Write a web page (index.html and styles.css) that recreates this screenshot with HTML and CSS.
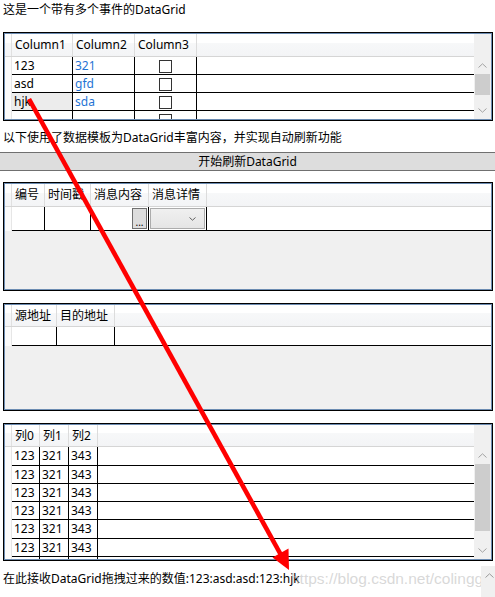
FILE: index.html
```html
<!DOCTYPE html>
<html>
<head>
<meta charset="utf-8">
<link rel="stylesheet" href="styles.css">
</head>
<body>
<div class="page">
  <div class="caption cap1">这是一个带有多个事件的DataGrid</div>

  <div class="grid g1">
    <div class="grid-in">
      <div class="main">
        <div class="hdr">
          <div class="rh"></div>
          <div class="hc c61">Column1</div>
          <div class="hc c62">Column2</div>
          <div class="hc c62">Column3</div>
          <div class="hfill"></div>
        </div>
        <div class="row">
          <div class="rh"></div>
          <div class="cells">
            <div class="cell c61">123</div>
            <div class="cell c62 blue">321</div>
            <div class="cell c62 center"><span class="chk"></span></div>
          </div>
        </div>
        <div class="row">
          <div class="rh"></div>
          <div class="cells">
            <div class="cell c61">asd</div>
            <div class="cell c62 blue">gfd</div>
            <div class="cell c62 center"><span class="chk"></span></div>
          </div>
        </div>
        <div class="row">
          <div class="rh"></div>
          <div class="cells">
            <div class="cell c61 sel">hjk</div>
            <div class="cell c62 blue">sda</div>
            <div class="cell c62 center"><span class="chk"></span></div>
          </div>
        </div>
        <div class="row">
          <div class="rh"></div>
          <div class="cells">
            <div class="cell c61"></div>
            <div class="cell c62 blue"></div>
            <div class="cell c62 center"><span class="chk"></span></div>
          </div>
        </div>
      </div>
      <div class="vscroll">
        <div class="sb-corner"></div>
        <div class="sb-btn"><svg width="9" height="5" viewBox="0 0 9 5"><polyline points="0.5,4.5 4.5,0.8 8.5,4.5" fill="none" stroke="#a3a3a3" stroke-width="1"/></svg></div>
        <div class="sb-thumb t1"></div>
        <div class="sb-track"></div>
        <div class="sb-btn"><svg width="9" height="5" viewBox="0 0 9 5"><polyline points="0.5,0.5 4.5,4.2 8.5,0.5" fill="none" stroke="#a3a3a3" stroke-width="1"/></svg></div>
      </div>
    </div>
  </div>

  <div class="caption cap2">以下使用了数据模板为DataGrid丰富内容，并实现自动刷新功能</div>
  <div class="refresh">开始刷新DataGrid</div>

  <div class="grid g2">
    <div class="grid-in">
      <div class="main">
        <div class="hdr">
          <div class="rh"></div>
          <div class="hc c33">编号</div>
          <div class="hc c46">时间戳</div>
          <div class="hc c58">消息内容</div>
          <div class="hc c58">消息详情</div>
          <div class="hfill"></div>
        </div>
        <div class="row r24">
          <div class="rh"></div>
          <div class="cells">
            <div class="cell c33"></div>
            <div class="cell c46"></div>
            <div class="cell c58 msg"><span class="dots">...</span></div>
            <div class="cell c58 cmbcell"><span class="combo"><svg width="7" height="4" viewBox="0 0 7 4"><polyline points="0.5,0.5 3.5,3.2 6.5,0.5" fill="none" stroke="#606060" stroke-width="1"/></svg></span></div>
          </div>
        </div>
        <div class="empty"></div>
      </div>
    </div>
  </div>

  <div class="grid g3">
    <div class="grid-in">
      <div class="main">
        <div class="hdr h22">
          <div class="rh"></div>
          <div class="hc c45">源地址</div>
          <div class="hc c58">目的地址</div>
          <div class="hfill"></div>
        </div>
        <div class="row r19">
          <div class="rh"></div>
          <div class="cells">
            <div class="cell c45"></div>
            <div class="cell c58"></div>
          </div>
        </div>
        <div class="empty"></div>
      </div>
    </div>
  </div>

  <div class="grid g4">
    <div class="grid-in">
      <div class="main">
        <div class="hdr h22">
          <div class="rh"></div>
          <div class="hc c28">列0</div>
          <div class="hc c29">列1</div>
          <div class="hc c29">列2</div>
          <div class="hfill"></div>
        </div>
        <div class="row r19">
          <div class="rh"></div>
          <div class="cells"><div class="cell c28">123</div><div class="cell c29">321</div><div class="cell c29">343</div></div>
        </div>
        <div class="row">
          <div class="rh"></div>
          <div class="cells"><div class="cell c28">123</div><div class="cell c29">321</div><div class="cell c29">343</div></div>
        </div>
        <div class="row">
          <div class="rh"></div>
          <div class="cells"><div class="cell c28">123</div><div class="cell c29">321</div><div class="cell c29">343</div></div>
        </div>
        <div class="row">
          <div class="rh"></div>
          <div class="cells"><div class="cell c28">123</div><div class="cell c29">321</div><div class="cell c29">343</div></div>
        </div>
        <div class="row r19">
          <div class="rh"></div>
          <div class="cells"><div class="cell c28">123</div><div class="cell c29">321</div><div class="cell c29">343</div></div>
        </div>
        <div class="row">
          <div class="rh"></div>
          <div class="cells"><div class="cell c28">123</div><div class="cell c29">321</div><div class="cell c29">343</div></div>
        </div>
        <div class="row">
          <div class="rh"></div>
          <div class="cells"><div class="cell c28"></div><div class="cell c29"></div><div class="cell c29"></div></div>
        </div>
      </div>
      <div class="vscroll">
        <div class="sb-corner h22c"></div>
        <div class="sb-btn"><svg width="9" height="5" viewBox="0 0 9 5"><polyline points="0.5,4.5 4.5,0.8 8.5,4.5" fill="none" stroke="#a3a3a3" stroke-width="1"/></svg></div>
        <div class="sb-thumb t4"></div>
        <div class="sb-track"></div>
        <div class="sb-btn"><svg width="9" height="5" viewBox="0 0 9 5"><polyline points="0.5,0.5 4.5,4.2 8.5,0.5" fill="none" stroke="#a3a3a3" stroke-width="1"/></svg></div>
      </div>
    </div>
  </div>

  <div class="caption cap3">在此接收DataGrid拖拽过来的数值:123:asd:asd:123:hjk</div>

  <div class="watermark">https://blog.csdn.net/colingg</div>
  <div class="corner-btn"><svg width="9" height="5" viewBox="0 0 9 5"><polyline points="0.5,4.5 4.5,0.8 8.5,4.5" fill="none" stroke="#9a9a9a" stroke-width="1"/></svg></div>

  <svg class="arrow" width="495" height="597" viewBox="0 0 495 597">
    <line x1="29" y1="99" x2="281" y2="555" stroke="#ff0000" stroke-width="4.6" stroke-linecap="butt"/>
    <polygon points="289,570 272.5,557.5 288.5,548.5" fill="#ff0000"/>
  </svg>
</div>
</body>
</html>
```

FILE: styles.css
```css
html, body {
  margin: 0;
  padding: 0;
  background: #ffffff;
}
body {
  font-family: "Noto Sans", "Noto Sans CJK SC", sans-serif;
  font-size: 12px;
  color: #000;
}
.page {
  position: relative;
  width: 495px;
  height: 597px;
  overflow: hidden;
}
.caption {
  padding-left: 3px;
  line-height: 20px;
  height: 20px;
  white-space: nowrap;
}
.cap1 { padding-top: 0; margin-bottom: 12px; }
.cap2 { margin-top: 7px; margin-bottom: 4px; }
.cap3 { margin-top: 8px; }

.refresh {
  box-sizing: border-box;
  height: 19px;
  background: #dddddd;
  border-top: 1px solid #707070;
  border-bottom: 1px solid #707070;
  text-align: center;
  line-height: 17px;
}

.grid {
  box-sizing: border-box;
  margin-left: 3px;
  width: 490px;
  border: 1px solid #000;
}
.grid-in {
  box-sizing: border-box;
  height: 100%;
  border: 1px solid #6c8cb2;
  display: flex;
  background: #f0f0f0;
}
.g1 { height: 89px; }
.g2 { height: 109px; margin-top: 11px; }
.g3 { height: 108px; margin-top: 12px; }
.g4 { height: 138px; margin-top: 12px; }

.main {
  flex: 1;
  display: flex;
  flex-direction: column;
  overflow: hidden;
  min-width: 0;
}
.hdr {
  flex: none;
  display: flex;
  height: 23px;
  box-sizing: border-box;
  border-bottom: 1px solid #d5d5d5;
  background: linear-gradient(#ffffff 0%, #ffffff 40%, #f7f8f9 40%, #f3f4f6 100%);
}
.h22 { height: 22px; }
.hdr .rh {
  background: transparent;
  border-right: 1px solid #e0e0e0;
}
.hc {
  flex: none;
  box-sizing: border-box;
  height: 100%;
  border-right: 1px solid #dcdcdc;
  padding-left: 3px;
  line-height: 22px;
  white-space: nowrap;
  overflow: hidden;
}
.hfill { flex: 1; }

.rh {
  flex: none;
  box-sizing: border-box;
  width: 7px;
  border-right: 1px solid #e6e6e6;
  background: #fbfbfb;
}
.row {
  flex: none;
  display: flex;
  height: 18px;
  background: #fff;
}
.r19 { height: 19px; }
.r24 { height: 24px; }
.cells {
  flex: 1;
  display: flex;
  box-sizing: border-box;
  border-bottom: 1px solid #000;
}
.cell {
  flex: none;
  box-sizing: border-box;
  border-right: 1px solid #000;
  padding-left: 2px;
  line-height: 17px;
  white-space: nowrap;
  overflow: hidden;
}
.blue { color: #1f74d4; }
.sel { background: #ececec; }
.center {
  display: flex;
  justify-content: center;
  padding-left: 0;
}
.chk {
  margin-top: 3px;
  box-sizing: border-box;
  width: 13px;
  height: 13px;
  border: 1px solid #333;
  background: #fff;
}
.c28 { width: 28px; }
.c29 { width: 29px; }
.c33 { width: 33px; }
.c45 { width: 45px; }
.c46 { width: 46px; }
.c58 { width: 58px; }
.c61 { width: 61px; }
.c62 { width: 62px; }

.msg {
  display: flex;
  justify-content: flex-end;
  align-items: center;
  padding: 0 1px 0 0;
}
.dots {
  box-sizing: border-box;
  width: 15px;
  height: 21px;
  background: #dddddd;
  border: 1px solid #707070;
  font-size: 10px;
  line-height: 26px;
  text-align: center;
  overflow: hidden;
}
.cmbcell {
  display: flex;
  align-items: center;
  padding: 0 0 0 1px;
}
.combo {
  box-sizing: border-box;
  width: 55px;
  height: 21px;
  border: 1px solid #acacac;
  background: linear-gradient(#f0f0f0, #e5e5e5);
  display: flex;
  justify-content: flex-end;
  align-items: center;
  padding-right: 8px;
}
.empty {
  flex: 1;
  background: #f0f0f0;
}

.vscroll {
  flex: none;
  width: 17px;
  display: flex;
  flex-direction: column;
  background: #f0f0f0;
}
.sb-corner { height: 23px; flex: none; }
.h22c { height: 22px; }
.sb-btn {
  flex: none;
  height: 17px;
  display: flex;
  justify-content: center;
  align-items: center;
}
.sb-thumb {
  flex: none;
  margin: 0 1px;
  background: #cdcdcd;
}
.t1 { height: 21px; }
.t4 { height: 67px; }
.sb-track { flex: 1; }

.watermark {
  position: absolute;
  left: 291px;
  top: 569px;
  font-family: "Liberation Sans", Arial, sans-serif;
  font-size: 15.5px;
  line-height: 20px;
  color: rgba(190, 190, 190, 0.6);
  white-space: nowrap;
}
.corner-btn {
  position: absolute;
  left: 481px;
  top: 566px;
  width: 16px;
  height: 31px;
  background: #f0f0f0;
  display: flex;
  justify-content: center;
  padding-top: 7px;
  box-sizing: border-box;
}
.arrow {
  position: absolute;
  left: 0;
  top: 0;
  pointer-events: none;
}
```
